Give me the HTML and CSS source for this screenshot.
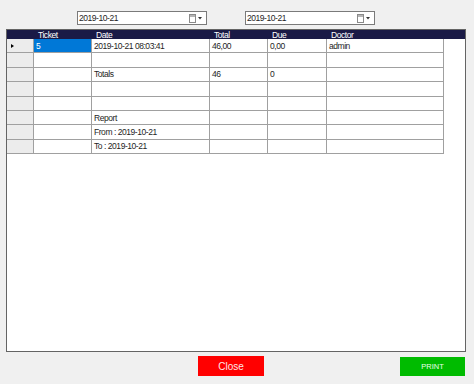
FILE: index.html
```html
<!DOCTYPE html>
<html lang="en">

<head>
  <meta charset="UTF-8">
  <meta name="viewport" content="width=device-width, initial-scale=1.0">
  <title>Report</title>
  <link rel="stylesheet" href="styles.css">
</head>

<body>
  <div class="toolbar">
    <div class="datepick">
      <span>2019-10-21</span>
      <svg class="cal" width="14" height="9" viewBox="0 0 14 9">
        <rect x="0.5" y="0.5" width="6" height="8" fill="#fff" stroke="#8a8a8a" />
        <rect x="1" y="1" width="5" height="2" fill="#b5b5b5" />
        <path d="M9 3 L13 3 L11 5.5 Z" fill="#333" />
      </svg>
    </div>
    <div class="datepick">
      <span>2019-10-21</span>
      <svg class="cal" width="14" height="9" viewBox="0 0 14 9">
        <rect x="0.5" y="0.5" width="6" height="8" fill="#fff" stroke="#8a8a8a" />
        <rect x="1" y="1" width="5" height="2" fill="#b5b5b5" />
        <path d="M9 3 L13 3 L11 5.5 Z" fill="#333" />
      </svg>
    </div>
  </div>

  <div class="gridBox">
    <div class="row head">
      <div class="rh"></div>
      <div>Ticket</div>
      <div>Date</div>
      <div>Total</div>
      <div>Due</div>
      <div>Doctor</div>
    </div>
    <div class="row">
      <div class="rh"><span class="arrow"></span></div>
      <div class="sel">5</div>
      <div>2019-10-21 08:03:41</div>
      <div>46,00</div>
      <div>0,00</div>
      <div>admin</div>
    </div>
    <div class="row">
      <div class="rh"></div><div></div><div></div><div></div><div></div><div></div>
    </div>
    <div class="row">
      <div class="rh"></div><div></div><div>Totals</div><div>46</div><div>0</div><div></div>
    </div>
    <div class="row">
      <div class="rh"></div><div></div><div></div><div></div><div></div><div></div>
    </div>
    <div class="row">
      <div class="rh"></div><div></div><div></div><div></div><div></div><div></div>
    </div>
    <div class="row">
      <div class="rh"></div><div></div><div>Report</div><div></div><div></div><div></div>
    </div>
    <div class="row">
      <div class="rh"></div><div></div><div>From : 2019-10-21</div><div></div><div></div><div></div>
    </div>
    <div class="row">
      <div class="rh"></div><div></div><div>To : 2019-10-21</div><div></div><div></div><div></div>
    </div>
  </div>

  <div class="actions">
    <button class="btn close">Close</button>
    <button class="btn print">PRINT</button>
  </div>
</body>

</html>
```

FILE: styles.css
```css
html,
body {
  margin: 0;
  height: 100%;
  overflow: hidden;
}

body {
  background: #f0f0f0;
  font-family: "Liberation Sans", Arial, sans-serif;
  font-size: 8.5px;
  letter-spacing: -0.45px;
  color: #1e1e1e;
}

div.toolbar {
  display: flex;
  gap: 38px;
  height: 29px;
  box-sizing: border-box;
  padding: 11px 0 0 77px;
}

div.datepick {
  display: flex;
  align-items: center;
  justify-content: space-between;
  width: 130px;
  height: 14px;
  box-sizing: border-box;
  padding: 0 3px 0 1px;
  background: #fff;
  border: 1px solid #7a7a7a;
}

div.datepick .cal {
  display: block;
}

div.gridBox {
  margin-left: 6px;
  width: 460px;
  height: 323px;
  box-sizing: border-box;
  background: #fff;
  border: 1px solid #646464;
}

div.row {
  display: grid;
  grid-template-columns: 27px 58px 118px 58px 59px 117px;
  height: 14.4px;
}

div.row > div {
  display: flex;
  align-items: center;
  padding-left: 2px;
  box-sizing: border-box;
  border-right: 1px solid #a0a0a0;
  border-bottom: 1px solid #a0a0a0;
  white-space: nowrap;
  overflow: hidden;
}

div.row.head {
  height: 9px;
  background: #1a1a46;
  color: #fff;
}

div.row.head > div {
  border: 0;
  padding-left: 4px;
}

div.row > div.rh {
  background: #ececec;
  padding-left: 4px;
}

div.row.head > div.rh {
  background: transparent;
}

div.row > div.sel {
  background: #0078d7;
  color: #fff;
}

span.arrow {
  width: 0;
  height: 0;
  border-top: 2.5px solid transparent;
  border-bottom: 2.5px solid transparent;
  border-left: 3px solid #000;
}

div.actions {
  display: flex;
  align-items: flex-start;
  padding: 4px 9px 0 198px;
}

.btn {
  border: 0;
  margin: 0;
  padding: 0;
  color: #fde8e8;
  font-family: "Liberation Sans", Arial, sans-serif;
}

.btn.close {
  width: 66px;
  height: 20px;
  background: #ff0000;
  font-size: 10px;
  letter-spacing: 0;
}

.btn.print {
  margin-left: auto;
  margin-top: 1px;
  width: 65px;
  height: 19px;
  background: #00bb00;
  color: #e8ffe8;
  font-size: 7.5px;
  letter-spacing: 0;
}
```
